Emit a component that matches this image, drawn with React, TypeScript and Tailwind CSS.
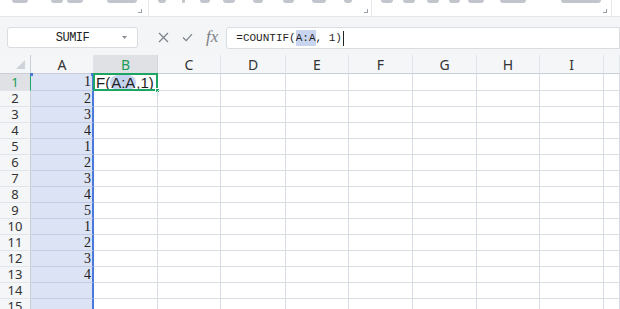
import React from 'react';

const COLS = ['A', 'B', 'C', 'D', 'E', 'F', 'G', 'H', 'I', 'J'];
const VALUES = [1, 2, 3, 4, 1, 2, 3, 4, 5, 1, 2, 3, 4, null, null];
const ROWS = Array.from({ length: 15 }, (_, i) => i + 1);

// bits of the ribbon that peek out at the top edge
const RIBBON: [number, number][] = [
  [12, 16], [51, 12], [67, 16], [107, 30],
  [158, 8], [182, 3], [200, 10], [223, 12], [253, 10], [283, 11], [312, 14], [344, 8],
  [381, 12], [403, 12], [427, 12], [449, 11], [468, 16], [500, 26], [561, 40],
];

function Toolbar() {
  return (
    <div className="relative h-[17px] bg-white border-b border-[#e4e6ea]">
      {RIBBON.map(([x, w]) => (
        <div key={x} className="absolute top-0 h-[3px] bg-[#c2c6cc] rounded-b-sm" style={{ left: x, width: w }} />
      ))}
      {[148, 371, 611].map(x => (
        <div key={x} className="absolute top-0 h-[16px] w-px bg-[#e6e8eb]" style={{ left: x }} />
      ))}
      {[138, 364, 603].map(x => (
        <div key={x} className="absolute top-[9px] h-[4px] w-[4px] border-r border-b border-[#9aa0a8]" style={{ left: x }} />
      ))}
    </div>
  );
}

function FormulaBar() {
  return (
    <div className="flex items-start h-[38px] bg-[#f4f5f7] pt-[10px]">
      <div className="relative ml-[7px] w-[131px] h-[21px] bg-white border border-[#d9dce1] rounded-[3px] flex items-center justify-center">
        <span className="text-[12px] text-[#222] font-['Liberation_Mono',monospace] tracking-[-0.5px]">SUMIF</span>
        <svg className="absolute right-[10px] top-[8px]" width="5" height="4" viewBox="0 0 5 4">
          <path d="M0 0h5L2.5 3z" fill="#8a8f97" />
        </svg>
      </div>
      <div className="flex items-center h-[21px] ml-[20px] gap-[13px] text-[#7b8089]">
        <svg width="11" height="11" viewBox="0 0 11 11">
          <path d="M1 1l9 9M10 1l-9 9" stroke="#7b8089" strokeWidth="1.2" />
        </svg>
        <svg width="11" height="9" viewBox="0 0 11 9">
          <path d="M1 4.5l3.2 3.2L10 1.2" stroke="#7b8089" strokeWidth="1.2" fill="none" />
        </svg>
        <span className="text-[17px] italic font-['Liberation_Serif',serif] leading-none -mt-[3px]">fx</span>
      </div>
      <div className="ml-[8px] flex-1 h-[22px] bg-white border border-[#d9dce1] rounded-l-[3px] flex items-center pl-[9px] text-[11px] text-[#1f1f1f] font-['Liberation_Mono',monospace]">
        <span>=COUNTIF(</span>
        <span className="bg-[#c9d5ef]">A:A</span>
        <span>, 1)</span>
        <span className="ml-px w-px h-[15px] bg-[#222]" />
      </div>
    </div>
  );
}

function Grid() {
  return (
    <div className="grid grid-cols-[31px_63px_64px_63px_65px_63px_64px_64px_63px_64px_1fr] font-['Noto_Sans',sans-serif]">
      {/* header row */}
      <div className="h-[19px] bg-[#f5f6f8] border-r border-b border-[#c9ced8] relative">
        <svg className="absolute right-[5px] bottom-[4px]" width="9" height="9" viewBox="0 0 9 9">
          <path d="M9 0v9H0z" fill="#cfd2d8" />
        </svg>
      </div>
      {COLS.map(c => (
        <div
          key={c}
          className={`h-[19px] border-r border-b flex items-center justify-center text-[14px] ${
            c === 'B'
              ? 'bg-[#dfe1e5] text-[#1c9d5a] border-r-[#d0d4db] border-b-[#1fa463]'
              : 'bg-[#f5f6f8] text-[#333] border-r-[#e1e4ea] border-b-[#c9ced8]'
          }`}
        >
          {c !== 'J' && c}
        </div>
      ))}

      {ROWS.map(r => (
        <React.Fragment key={r}>
          <div
            className={`${r === 1 ? 'h-[17px] bg-[#dfe1e5] text-[#1c9d5a] border-r-[#1fa463]' : 'h-4 bg-[#f5f6f8] text-[#333] border-r-[#c9ced8]'} border-r border-b border-b-[#e1e4ea] flex items-center justify-center text-[13px] leading-none`}
          >
            {r}
          </div>
          <div className="relative bg-[#dbe3f5] border-r-2 border-r-[#4a78db] border-b border-b-[#c3cce0] flex items-center justify-end pr-[1px] text-[14px] leading-none text-[#222] font-['Liberation_Serif',serif]">
            {VALUES[r - 1]}
            {r === 1 && (
              <>
                <div className="absolute -left-[1px] -top-[1px] w-[3px] h-[3px] bg-[#4a78db]" />
                <div className="absolute -right-[2px] -top-[1px] w-[3px] h-[3px] bg-[#4a78db]" />
              </>
            )}
          </div>
          {COLS.slice(1).map(c => (
            <div key={c} className="relative border-r border-b border-[#d8dce4]">
              {r === 1 && c === 'B' && (
                <>
                  <div className="absolute -left-[1px] -top-[1px] right-[-1px] bottom-[-1px] border-2 border-[#1fa463] pointer-events-none" />
                  <div className="absolute -right-[3px] -bottom-[3px] w-[5px] h-[5px] bg-[#1fa463] border border-white" />
                  <div className="flex items-center h-full pl-[2px] text-[15px] leading-none text-[#1f1f1f] font-['Liberation_Sans',sans-serif] whitespace-nowrap">
                    <span>F(</span>
                    <span className="bg-[#c5d3ef] rounded-full px-[1px]">A:A</span>
                    <span>,1)</span>
                  </div>
                </>
              )}
            </div>
          ))}
        </React.Fragment>
      ))}
    </div>
  );
}

export default function App() {
  return (
    <div className="w-[620px] h-[309px] overflow-hidden bg-white">
      <Toolbar />
      <FormulaBar />
      <Grid />
    </div>
  );
}
